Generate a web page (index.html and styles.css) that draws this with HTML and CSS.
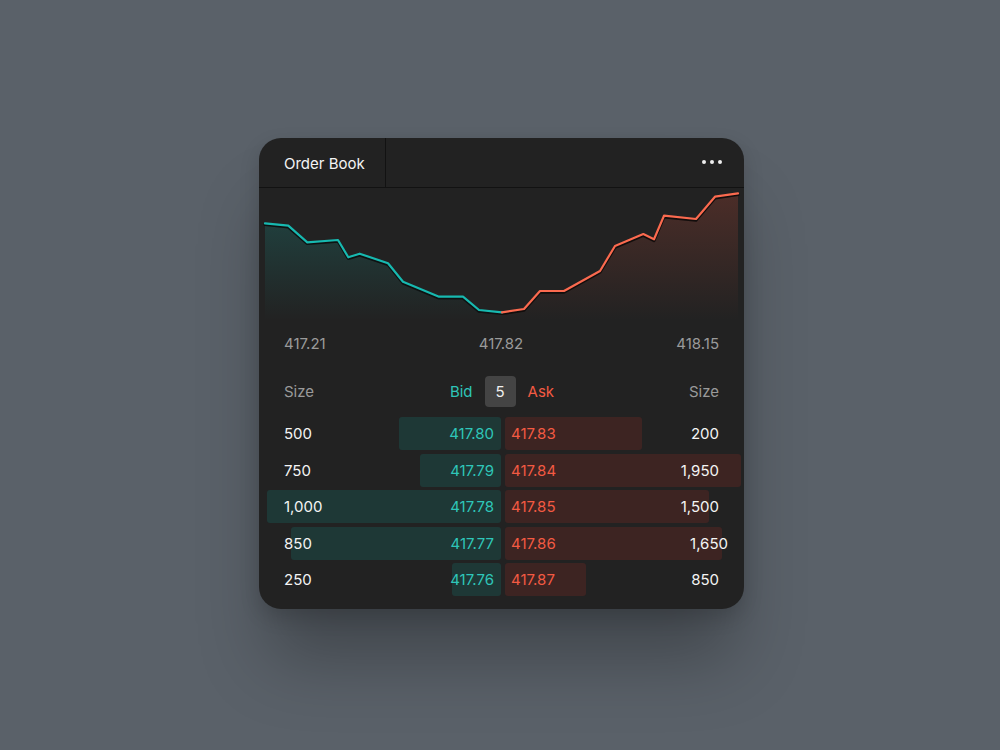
FILE: index.html
```html
<!DOCTYPE html>
<html>
<head>
<meta charset="utf-8">
<link rel="stylesheet" href="styles.css">
</head>
<body>
<div class="card">
  <div class="header">
    <div class="tab">Order Book</div>
    <div class="dots"><span></span><span></span><span></span></div>
  </div>
  <svg class="chart" width="485" height="132" viewBox="0 0 485 132">
    <defs>
      <linearGradient id="gt" x1="0" y1="0" x2="0" y2="1">
        <stop offset="0" stop-color="#1aa39b" stop-opacity="0.22"/>
        <stop offset="1" stop-color="#1aa39b" stop-opacity="0"/>
      </linearGradient>
      <linearGradient id="gr" x1="0" y1="0" x2="0" y2="1">
        <stop offset="0" stop-color="#e0553e" stop-opacity="0.22"/>
        <stop offset="1" stop-color="#e0553e" stop-opacity="0"/>
      </linearGradient>
    </defs>
    <polygon fill="url(#gt)" points="6,35.3 29.3,37.7 48.3,54.3 79,52 89.3,69.3 100.7,65.7 129,75.3 144,93.7 180,108.7 204,108.7 220,122 243,124.3 243,132 6,132"/>
    <polygon fill="url(#gr)" points="243,124.3 265,121 281,103 305,103 341,83 356,58 384.3,46 395,51.3 405,27.7 437,31 456,8.7 479,5.3 479,132 243,132"/>
    <g fill="none" stroke-linejoin="round" stroke-linecap="round">
      <polyline transform="translate(0,1.3)" stroke="#0e1212" stroke-width="3" points="6,35.3 29.3,37.7 48.3,54.3 79,52 89.3,69.3 100.7,65.7 129,75.3 144,93.7 180,108.7 204,108.7 220,122 243,124.3"/>
      <polyline transform="translate(0,1.3)" stroke="#120d0c" stroke-width="3" points="243,124.3 265,121 281,103 305,103 341,83 356,58 384.3,46 395,51.3 405,27.7 437,31 456,8.7 479,5.3"/>
      <polyline stroke="#17b9b0" stroke-width="2.2" points="6,35.3 29.3,37.7 48.3,54.3 79,52 89.3,69.3 100.7,65.7 129,75.3 144,93.7 180,108.7 204,108.7 220,122 243,124.3"/>
      <polyline stroke="#fb6a4f" stroke-width="2.2" points="243,124.3 265,121 281,103 305,103 341,83 356,58 384.3,46 395,51.3 405,27.7 437,31 456,8.7 479,5.3"/>
    </g>
  </svg>
  <div class="axis">
    <span>417.21</span><span>417.82</span><span>418.15</span>
  </div>
  <div class="cols">
    <span class="col-size">Size</span>
    <div class="col-mid">
      <span class="bid">Bid</span>
      <span class="depth">5</span>
      <span class="ask">Ask</span>
    </div>
    <span class="col-size">Size</span>
  </div>
  <div class="rows">
    <div class="row">
      <div class="half half-bid"><div class="bar bar-bid" style="width:102px"></div><span class="size">500</span><span class="price bid">417.80</span></div>
      <div class="half half-ask"><div class="bar bar-ask" style="width:137px"></div><span class="price ask">417.83</span><span class="size">200</span></div>
    </div>
    <div class="row">
      <div class="half half-bid"><div class="bar bar-bid" style="width:81px"></div><span class="size">750</span><span class="price bid">417.79</span></div>
      <div class="half half-ask"><div class="bar bar-ask" style="width:236px"></div><span class="price ask">417.84</span><span class="size">1,950</span></div>
    </div>
    <div class="row">
      <div class="half half-bid"><div class="bar bar-bid" style="width:234px"></div><span class="size">1,000</span><span class="price bid">417.78</span></div>
      <div class="half half-ask"><div class="bar bar-ask" style="width:204px"></div><span class="price ask">417.85</span><span class="size">1,500</span></div>
    </div>
    <div class="row">
      <div class="half half-bid"><div class="bar bar-bid" style="width:210px"></div><span class="size">850</span><span class="price bid">417.77</span></div>
      <div class="half half-ask"><div class="bar bar-ask" style="width:217px"></div><span class="price ask">417.86</span><span class="size size-off">1,650</span></div>
    </div>
    <div class="row">
      <div class="half half-bid"><div class="bar bar-bid" style="width:49px"></div><span class="size">250</span><span class="price bid">417.76</span></div>
      <div class="half half-ask"><div class="bar bar-ask" style="width:81px"></div><span class="price ask">417.87</span><span class="size">850</span></div>
    </div>
  </div>
</div>
</body>
</html>
```
FILE: styles.css
```css
html, body {
  margin: 0;
  padding: 0;
}
body {
  width: 1000px;
  height: 750px;
  background: #5a6169;
  font-family: Inter, "Noto Sans", sans-serif;
  overflow: hidden;
}
.card {
  margin: 138px 0 0 259px;
  width: 485px;
  height: 471px;
  background: #222222;
  border-radius: 22px;
  box-shadow: 0 60px 70px -10px rgba(0, 0, 0, 0.28), 0 8px 20px rgba(0, 0, 0, 0.15);
  overflow: hidden;
  display: flex;
  flex-direction: column;
}
.header {
  height: 49px;
  border-bottom: 1px solid #121212;
  display: flex;
  align-items: center;
  justify-content: space-between;
  flex-shrink: 0;
}
.tab {
  width: 101px;
  height: 49px;
  padding-left: 25px;
  padding-top: 1px;
  box-sizing: content-box;
  border-right: 1px solid #121212;
  display: flex;
  align-items: center;
  color: #f4f4f4;
  font-size: 15px;
}
.dots {
  display: flex;
  gap: 4px;
  padding-right: 22px;
  padding-bottom: 2px;
}
.dots span {
  width: 4px;
  height: 4px;
  border-radius: 50%;
  background: #eeeeee;
}
.chart {
  display: block;
  flex-shrink: 0;
}
.axis {
  display: flex;
  justify-content: space-between;
  padding: 12px 25px 0;
  line-height: 24px;
  font-size: 15px;
  color: #9a9a9a;
}
.cols {
  margin-top: 20px;
  height: 31px;
  padding: 0 25px;
  display: flex;
  align-items: center;
  justify-content: space-between;
  font-size: 15px;
  color: #9a9a9a;
}
.col-mid {
  display: flex;
  align-items: center;
  gap: 12px;
  margin-left: 1px;
}
.depth {
  width: 31px;
  height: 31px;
  border-radius: 4px;
  background: #444444;
  color: #f0f0f0;
  display: flex;
  align-items: center;
  justify-content: center;
}
.bid { color: #2ec6b9; }
.ask { color: #f35a43; }
.rows {
  margin-top: 10px;
  display: flex;
  flex-direction: column;
  gap: 3.5px;
}
.row {
  display: flex;
  height: 33px;
  font-size: 15px;
}
.half {
  position: relative;
  display: flex;
  align-items: center;
  justify-content: space-between;
}
.half-bid {
  width: 242px;
  padding: 0 7px 0 25px;
  box-sizing: border-box;
}
.half-ask {
  width: 239px;
  margin-left: 4px;
  padding: 0 25px 0 6px;
  box-sizing: border-box;
}
.bar {
  position: absolute;
  top: 0;
  bottom: 0;
  border-radius: 3px;
}
.bar-bid {
  right: 0;
  background: #1e3836;
}
.bar-ask {
  left: 0;
  background: #3d2422;
}
.size, .price {
  position: relative;
}
.size {
  color: #f4f4f4;
}
.size-off {
  margin-right: -9px;
}
```
